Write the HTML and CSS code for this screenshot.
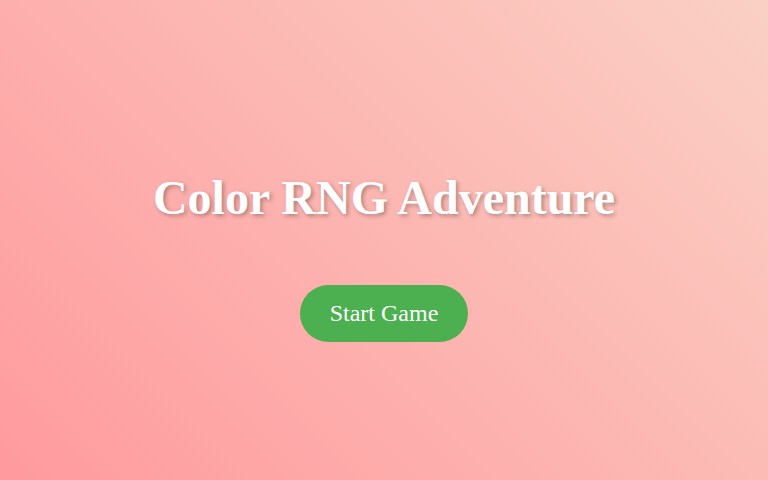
FILE: index.html
```html
<!DOCTYPE html>
<html>
<head>
    <meta name="viewport" content="width=device-width, initial-scale=1.0">
    <link rel="stylesheet" href="styles.css">
</head>
<body>
    <div class="start-screen">
        <h1 class="game-title">Color RNG Adventure</h1>
        <button class="start-btn">Start Game</button>
    </div>
</body>
</html>
```

FILE: styles.css
```css
html, body {
    margin: 0;
    padding: 0;
    height: 100%;
}

body {
    background: linear-gradient(45deg, #ff9a9e 0%, #fad0c4 100%);
    font-family: "Liberation Serif", "Times New Roman", serif;
    display: flex;
    justify-content: center;
    align-items: center;
    overflow: hidden;
}

.start-screen {
    display: flex;
    flex-direction: column;
    align-items: center;
}

.game-title {
    color: white;
    font-size: 48px;
    margin: 32px 0 60px;
    text-shadow: 2px 2px 4px rgba(0, 0, 0, 0.3);
}

.start-btn {
    background-color: #4CAF50;
    color: white;
    border: none;
    padding: 15px 30px;
    font-family: inherit;
    font-size: 24px;
    border-radius: 30px;
    cursor: pointer;
}
```
